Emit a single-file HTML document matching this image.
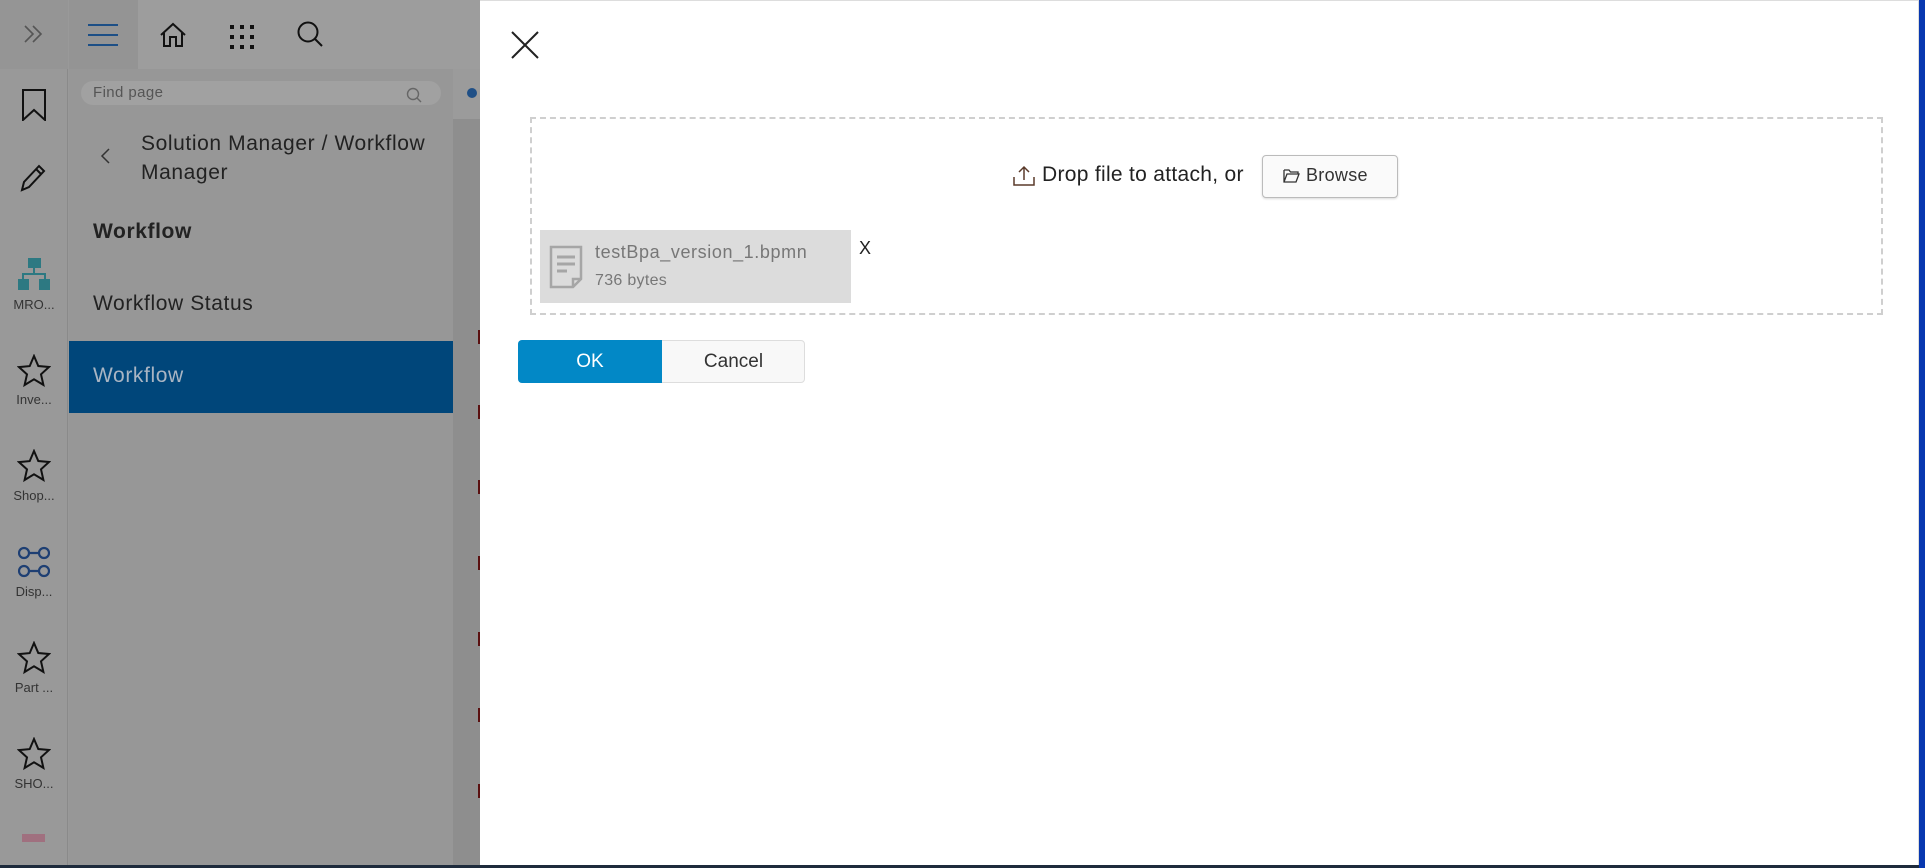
<!DOCTYPE html>
<html><head><meta charset="utf-8"><style>
*{margin:0;padding:0;box-sizing:border-box}
body{width:1925px;height:868px;overflow:hidden;background:#999;font-family:"Liberation Sans",sans-serif;position:relative}
.a{position:absolute}
.rail{left:0;top:0;width:68px;height:868px;background:#999;border-right:1px solid #8a8a8a}
.lbl{font-size:13px;color:#333;width:68px;text-align:center;left:0}
.nav{left:69px;top:0;width:384px;height:868px;background:#979797}
.txt{color:#222;font-size:21px;letter-spacing:0.6px}
</style></head><body>
<div class="a rail"></div>
<div class="a" style="left:0;top:0;width:68px;height:69px;background:#959595"></div>
<div class="a" style="left:69px;top:0;width:69px;height:69px;background:#949494"></div>
<div class="a" style="left:138px;top:0;width:342px;height:69px;background:#9d9d9d"></div>
<div class="a nav" style="top:69px;height:799px"></div>
<div class="a" style="left:453px;top:69px;width:27px;height:50px;background:#9b9b9b"></div>
<div class="a" style="left:453px;top:119px;width:27px;height:749px;background:#8e8e8e"></div>
<div class="a" style="left:467px;top:88px;width:10px;height:10px;border-radius:50%;background:#1f4f86"></div>
<div class="a" style="left:478px;top:330px;width:2px;height:14px;background:#5a1010"></div>
<div class="a" style="left:478px;top:405px;width:2px;height:14px;background:#5a1010"></div>
<div class="a" style="left:478px;top:480px;width:2px;height:14px;background:#5a1010"></div>
<div class="a" style="left:478px;top:556px;width:2px;height:14px;background:#5a1010"></div>
<div class="a" style="left:478px;top:632px;width:2px;height:14px;background:#5a1010"></div>
<div class="a" style="left:478px;top:708px;width:2px;height:14px;background:#5a1010"></div>
<div class="a" style="left:478px;top:784px;width:2px;height:14px;background:#5a1010"></div>

<svg class="a" style="left:22px;top:22px" width="24" height="24" viewBox="0 0 24 24" fill="none" stroke="#555" stroke-width="1.6"><path d="M3 4l8 8-8 8M11 4l8 8-8 8"/></svg>
<svg class="a" style="left:88px;top:23px" width="30" height="24" viewBox="0 0 30 24" stroke="#1d4f86" stroke-width="2"><path d="M0 2h30M0 12h30M0 22h30"/></svg>
<svg class="a" style="left:159px;top:22px" width="28" height="26" viewBox="0 0 28 26" fill="none" stroke="#111" stroke-width="2"><path d="M2 13L14 2l12 11M5 11v13h6v-9h6v9h6V11"/></svg>
<svg class="a" style="left:230px;top:25px" width="24" height="24" viewBox="0 0 24 24" fill="#111"><rect x="0" y="0" width="4" height="4"/><rect x="10" y="0" width="4" height="4"/><rect x="20" y="0" width="4" height="4"/><rect x="0" y="10" width="4" height="4"/><rect x="10" y="10" width="4" height="4"/><rect x="20" y="10" width="4" height="4"/><rect x="0" y="20" width="4" height="4"/><rect x="10" y="20" width="4" height="4"/><rect x="20" y="20" width="4" height="4"/></svg>
<svg class="a" style="left:297px;top:21px" width="27" height="27" viewBox="0 0 27 27" fill="none" stroke="#111" stroke-width="2"><circle cx="11" cy="11" r="9.5"/><path d="M18 18l7 7"/></svg>

<div class="a" style="left:81px;top:81px;width:360px;height:24px;border-radius:12px;background:#a1a1a1"></div>
<div class="a" style="left:93px;top:84px;font-size:15px;color:#555;letter-spacing:0.4px">Find page</div>
<svg class="a" style="left:406px;top:87px" width="16" height="16" viewBox="0 0 16 16" fill="none" stroke="#666" stroke-width="1.4"><circle cx="7" cy="7" r="5.5"/><path d="M11 11l4 4"/></svg>

<svg class="a" style="left:100px;top:148px" width="12" height="16" viewBox="0 0 12 16" fill="none" stroke="#333" stroke-width="1.5"><path d="M9 1L2 8l7 7"/></svg>
<div class="a txt" style="left:141px;top:129px;line-height:29px">Solution Manager / Workflow<br>Manager</div>
<div class="a txt" style="left:93px;top:220px;font-weight:bold">Workflow</div>
<div class="a txt" style="left:93px;top:292px">Workflow Status</div>
<div class="a" style="left:69px;top:341px;width:384px;height:72px;background:#00467a"></div>
<div class="a txt" style="left:93px;top:364px;color:#a9b5c3">Workflow</div>

<svg class="a" style="left:22px;top:89px" width="24" height="32" viewBox="0 0 24 32" fill="none" stroke="#111" stroke-width="2"><path d="M1 1h22v30l-11-10L1 31z"/></svg>
<svg class="a" style="left:19px;top:163px" width="28" height="30" viewBox="0 0 28 30" fill="none" stroke="#111" stroke-width="2"><path d="M3 27l2-8L20 3l5 5-15 16z M17 6l5 5"/></svg>
<svg class="a" style="left:18px;top:258px" width="32" height="32" viewBox="0 0 32 32" fill="#2d7982"><rect x="10" y="0" width="13" height="10"/><rect x="0" y="21" width="11" height="11"/><rect x="21" y="21" width="11" height="11"/><path d="M16 10v6M5 21v-5h22v5" stroke="#2d7982" stroke-width="2" fill="none"/></svg>
<div class="a lbl" style="top:297px">MRO...</div>
<svg class="a" style="left:17px;top:354px" width="34" height="34" viewBox="0 0 34 34" fill="none" stroke="#111" stroke-width="2"><path d="M17 2l4.3 10 10.7 1-8 7.3 2.4 10.6L17 25.3 7.6 31l2.4-10.6-8-7.3 10.7-1z"/></svg>
<div class="a lbl" style="top:392px">Inve...</div>
<svg class="a" style="left:17px;top:449px" width="34" height="34" viewBox="0 0 34 34" fill="none" stroke="#111" stroke-width="2"><path d="M17 2l4.3 10 10.7 1-8 7.3 2.4 10.6L17 25.3 7.6 31l2.4-10.6-8-7.3 10.7-1z"/></svg>
<div class="a lbl" style="top:488px">Shop...</div>
<svg class="a" style="left:18px;top:546px" width="32" height="32" viewBox="0 0 32 32" fill="none" stroke="#1e3f73" stroke-width="2.2"><circle cx="6" cy="7" r="5"/><circle cx="26" cy="7" r="5"/><circle cx="6" cy="25" r="5"/><circle cx="26" cy="25" r="5"/><path d="M11 7h10M11 25h10"/></svg>
<div class="a lbl" style="top:584px">Disp...</div>
<svg class="a" style="left:17px;top:641px" width="34" height="34" viewBox="0 0 34 34" fill="none" stroke="#111" stroke-width="2"><path d="M17 2l4.3 10 10.7 1-8 7.3 2.4 10.6L17 25.3 7.6 31l2.4-10.6-8-7.3 10.7-1z"/></svg>
<div class="a lbl" style="top:680px">Part ...</div>
<svg class="a" style="left:17px;top:737px" width="34" height="34" viewBox="0 0 34 34" fill="none" stroke="#111" stroke-width="2"><path d="M17 2l4.3 10 10.7 1-8 7.3 2.4 10.6L17 25.3 7.6 31l2.4-10.6-8-7.3 10.7-1z"/></svg>
<div class="a lbl" style="top:776px">SHO...</div>
<div class="a" style="left:22px;top:834px;width:23px;height:8px;background:#a0707f"></div>

<div class="a" style="left:0;top:865px;width:1925px;height:3px;background:#1e2b3c"></div>
<div class="a" style="left:480px;top:0;width:1439px;height:865px;background:#fff;border-top:1px solid #ddd;border-right:1px solid #ddd"></div>
<div class="a" style="left:1919px;top:0;width:6px;height:868px;background:#0838b0"></div>
<svg class="a" style="left:510px;top:30px" width="30" height="30" viewBox="0 0 30 30" stroke="#222" stroke-width="2"><path d="M2 2l26 26M28 2L2 28"/></svg>
<div class="a" style="left:530px;top:117px;width:1353px;height:198px;border:2px dashed #cfcfcf"></div>
<svg class="a" style="left:1013px;top:165px" width="22" height="22" viewBox="0 0 22 22" fill="none" stroke="#5a3a2a" stroke-width="1.5"><path d="M1 12v8h20v-8M11 15V2M6 7l5-5 5 5"/></svg>
<div class="a" style="left:1042px;top:163px;font-size:21px;color:#222;letter-spacing:0.3px">Drop file to attach, or</div>
<div class="a" style="left:1262px;top:155px;width:136px;height:43px;border:1px solid #bbb;border-radius:4px;background:#fafafa;box-shadow:0 1px 2px rgba(0,0,0,.15)"></div>
<svg class="a" style="left:1283px;top:169px" width="17" height="14" viewBox="0 0 17 14" fill="none" stroke="#333" stroke-width="1.3"><path d="M1 1h5l1.5 2H15v2M1 1v12h12l3-8H4L1 13"/></svg>
<div class="a" style="left:1306px;top:165px;font-size:18px;color:#333;letter-spacing:0.3px">Browse</div>
<div class="a" style="left:540px;top:230px;width:311px;height:73px;background:#dcdcdc"></div>
<svg class="a" style="left:549px;top:245px" width="34" height="44" viewBox="0 0 34 44" fill="none" stroke="#a6a6a6" stroke-width="2.5"><path d="M2 2h30v32l-8 8H2z M32 34h-8v8"/><path d="M8 12h18M8 19h18M8 26h10" stroke-width="3"/></svg>
<div class="a" style="left:595px;top:242px;font-size:18px;color:#777;letter-spacing:0.6px">testBpa_version_1.bpmn</div>
<div class="a" style="left:595px;top:272px;font-size:16px;color:#777;letter-spacing:0.3px">736 bytes</div>
<div class="a" style="left:859px;top:238px;font-size:18px;color:#222">X</div>
<div class="a" style="left:518px;top:340px;width:287px;height:43px;border:1px solid #ddd;border-radius:4px;background:#f8f8f8"></div>
<div class="a" style="left:518px;top:340px;width:144px;height:43px;border-radius:4px 0 0 4px;background:#0288c6"></div>
<div class="a" style="left:518px;top:351px;width:144px;text-align:center;font-size:19px;color:#fff">OK</div>
<div class="a" style="left:662px;top:351px;width:143px;text-align:center;font-size:19px;color:#333">Cancel</div>
</body></html>
